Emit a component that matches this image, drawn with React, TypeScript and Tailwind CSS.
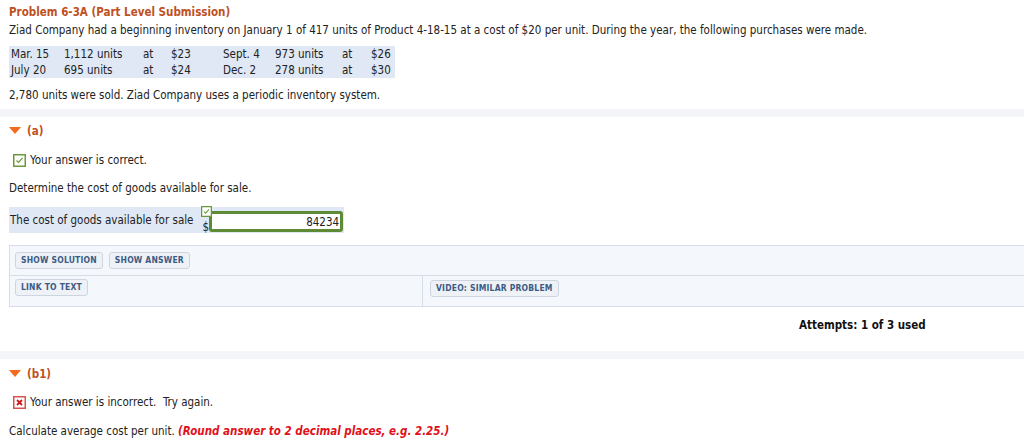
import React from "react";

const font = { fontFamily: '"DejaVu Sans Condensed","DejaVu Sans",Tahoma,sans-serif' };

function Tri() {
  return (
    <svg width="12" height="8" viewBox="0 0 12 8" className="mr-[6px]">
      <polygon points="0,0 12,0 6,7" fill="#f26b1d" />
    </svg>
  );
}

function CheckBox({ size = 13 }: { size?: number }) {
  return (
    <svg width={size} height={size} viewBox="0 0 13 13">
      <rect x="0.75" y="0.75" width="11.5" height="11.5" fill="#fff" stroke="#6b9a3a" strokeWidth="1.5" />
      <polyline points="3.5,6.5 5.5,8.5 9.5,4" fill="none" stroke="#6b9a3a" strokeWidth="1.2" />
    </svg>
  );
}

function XBox() {
  return (
    <svg width="13" height="13" viewBox="0 0 13 13">
      <rect x="0.75" y="0.75" width="11.5" height="11.5" fill="#fff" stroke="#d9534f" strokeWidth="1.5" />
      <path d="M4 4 L9 9 M9 4 L4 9" stroke="#d01818" strokeWidth="1.8" />
    </svg>
  );
}

function Btn({ children }: { children: React.ReactNode }) {
  return (
    <span className="inline-flex h-[17px] items-center rounded-[3px] border border-[#cdd6e0] bg-[#eef2f7] px-[5px] text-[8.5px] font-bold tracking-[0.2px] text-[#3c5a84]">
      {children}
    </span>
  );
}

const rows = [
  ["Mar. 15", "1,112 units", "at", "$23", "Sept. 4", "973 units", "at", "$26"],
  ["July 20", "695 units", "at", "$24", "Dec. 2", "278 units", "at", "$30"],
];

export default function App() {
  return (
    <div style={font} className="h-[443px] w-[1024px] overflow-hidden bg-[#f3f5f8] text-[11.5px] text-[#222]">
      <div className="bg-white px-[9px] pb-[6px] pt-[4px]">
        <div className="text-[11.5px] font-bold leading-[16px] text-[#c0501f]">Problem 6-3A (Part Level Submission)</div>
        <div className="mt-[2px] leading-[16px]">
          Ziad Company had a beginning inventory on January 1 of 417 units of Product 4-18-15 at a cost of $20 per unit. During the year, the following purchases were made.
        </div>
        <div className="mt-[8px] inline-grid grid-cols-[53px_79px_28px_52px_52px_67px_29px_24px] bg-[#dfe8f4] pl-[2px] leading-[16px]">
          {rows.map((r, i) =>
            r.map((c, j) => <div key={i + "-" + j}>{c}</div>)
          )}
        </div>
        <div className="mt-[9px] leading-[16px]">2,780 units were sold. Ziad Company uses a periodic inventory system.</div>
      </div>

      <div className="mt-[8px] bg-white pl-[9px] pb-[18px] pt-[6px]">
        <div className="flex items-center text-[11.5px] font-bold leading-[16px] text-[#c0501f]">
          <Tri />
          (a)
        </div>
        <div className="mt-[13px] flex items-center gap-[4px] pl-[4px] leading-[16px]">
          <CheckBox />
          <span>Your answer is correct.</span>
        </div>
        <div className="mt-[12px] leading-[16px]">Determine the cost of goods available for sale.</div>
        <div className="mt-[11px] flex h-[26px] w-fit items-center bg-[#dfe8f4] pr-[1px]">
          <span className="whitespace-nowrap pl-[1px] leading-[16px]">The cost of goods available for sale</span>
          <div className="relative ml-[9px] flex h-[26px] items-end">
            <span className="mb-[-1px] leading-[14px]">$</span>
            <div className="absolute left-[-1px] top-[-1px]">
              <CheckBox size={11} />
            </div>
            <div className="mb-[1px] flex h-[21px] w-[134px] items-center justify-end rounded-[3px] border-[3px] border-[#5f8a35] bg-white pr-[1px] leading-[14px]">
              84234
            </div>
          </div>
        </div>

        <div className="mt-[12px] border-y border-l border-[#d6dde6] bg-[#f4f7fb]">
          <div className="flex h-[30px] items-center gap-[6px] border-b border-[#d6dde6] px-[5px]">
            <Btn>SHOW SOLUTION</Btn>
            <Btn>SHOW ANSWER</Btn>
          </div>
          <div className="flex h-[30px]">
            <div className="w-[413px] border-r border-[#d6dde6] pl-[5px] pt-[2px]">
              <Btn>LINK TO TEXT</Btn>
            </div>
            <div className="pl-[7px] pt-[3px]">
              <Btn>VIDEO: SIMILAR PROBLEM</Btn>
            </div>
          </div>
        </div>
        <div className="mt-[10px] pl-[790px] font-bold leading-[16px] text-[#111]">Attempts: 1 of 3 used</div>
      </div>

      <div className="mt-[8px] bg-white px-[9px] pt-[7px] pb-[20px]">
        <div className="flex items-center text-[11.5px] font-bold leading-[16px] text-[#c0501f]">
          <Tri />
          (b1)
        </div>
        <div className="mt-[12px] flex items-center gap-[4px] pl-[4px] leading-[16px]">
          <XBox />
          <span>Your answer is incorrect.&nbsp; Try again.</span>
        </div>
        <div className="mt-[13px] leading-[16px]">
          Calculate average cost per unit.{" "}
          <span className="font-bold italic text-[#e0101a]">(Round answer to 2 decimal places, e.g. 2.25.)</span>
        </div>
      </div>
    </div>
  );
}
